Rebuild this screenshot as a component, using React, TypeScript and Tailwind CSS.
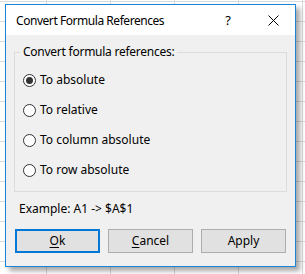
import { useState } from 'react'

const OPTIONS = ['To absolute', 'To relative', 'To column absolute', 'To row absolute']

function Radio({ checked, label, onClick }: { checked: boolean; label: string; onClick: () => void }) {
  return (
    <div className="h-[30px] flex items-center pl-[8px] cursor-default" onClick={onClick}>
      <div className="w-[13px] h-[13px] rounded-full border border-[#333333] bg-white flex items-center justify-center">
        {checked && <div className="w-[7px] h-[7px] rounded-full bg-[#333333]" />}
      </div>
      <span className="ml-[4px]">{label}</span>
    </div>
  )
}

function Btn({ children, focused }: { children: React.ReactNode; focused?: boolean }) {
  return (
    <button
      className={`w-[85px] h-[24px] bg-[#e1e1e1] flex items-center justify-center ${
        focused ? 'border-2 border-[#0078d7]' : 'border border-[#adadad]'
      }`}
    >
      {children}
    </button>
  )
}

export default function App() {
  const [sel, setSel] = useState(0)

  return (
    <div
      className="w-[305px] h-[274px] overflow-hidden bg-white pt-[4px] pl-[5px] text-[12px] text-black
        bg-[linear-gradient(to_right,#dadada_1px,transparent_1px),linear-gradient(to_bottom,#dadada_1px,transparent_1px)]
        bg-[size:64px_20px] bg-[position:46px_1px]"
      style={{ fontFamily: '"Noto Sans", "Open Sans", sans-serif' }}
    >
      <div className="w-[291px] h-[263px] border border-[#1883d7] bg-[#f0f0f0] flex flex-col shadow-[4px_4px_5px_rgba(0,0,0,0.35)]">
        {/* Title bar */}
        <div className="h-[30px] bg-white flex items-center pl-[10px] pt-[1px] flex-shrink-0">
          <span className="flex-1 tracking-[-0.45px]">Convert Formula References</span>
          <span className="w-[46px] text-center text-[13px]">?</span>
          <div className="w-[44px] flex justify-center">
            <svg width="11" height="11" viewBox="0 0 11 11">
              <path d="M0.5 0.5 L10.5 10.5 M10.5 0.5 L0.5 10.5" stroke="#000" strokeWidth="1" />
            </svg>
          </div>
        </div>

        {/* Body */}
        <div className="flex-1 px-[8px]">
          <fieldset className="mt-[9px] border border-[#dcdcdc] pb-[6px]">
            <legend className="ml-[5px] px-[3px] leading-[16px] tracking-[-0.25px]">Convert formula references:</legend>
            <div className="mt-[5px]">
              {OPTIONS.map((o, i) => (
                <Radio key={o} label={o} checked={sel === i} onClick={() => setSel(i)} />
              ))}
            </div>
          </fieldset>

          <div className="mt-[9px] pl-[5px] leading-[16px]">Example: A1 -&gt; $A$1</div>

          <div className="mt-[12px] pl-[1px] flex gap-[8px]">
            <Btn focused>
              <span className="underline underline-offset-2">O</span>k
            </Btn>
            <Btn>
              <span className="underline underline-offset-2">C</span>ancel
            </Btn>
            <Btn>Apply</Btn>
          </div>
        </div>
      </div>
    </div>
  )
}
